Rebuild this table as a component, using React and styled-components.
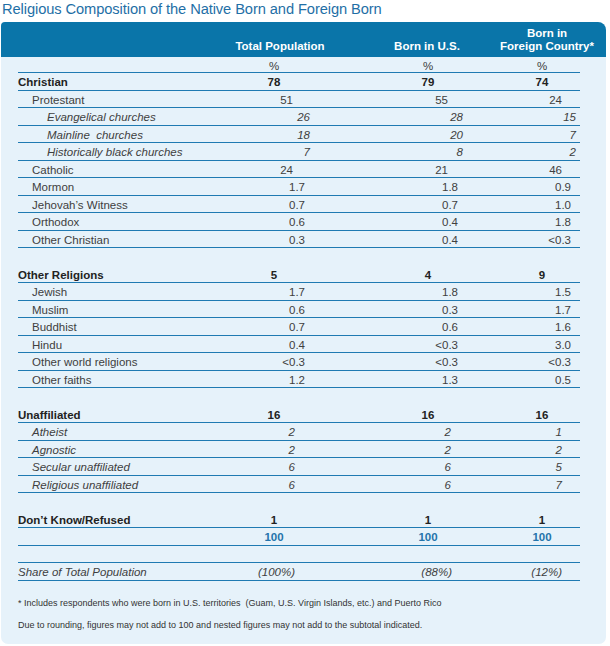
import React from 'react'
import styled, { createGlobalStyle } from 'styled-components'

const GlobalStyle = createGlobalStyle`
  body {
    margin: 0;
    background: #ffffff;
    font-family: "Liberation Sans", Arial, sans-serif;
  }
`

// right padding of plain numbers, per column, by kind of figure
const PAD = {
  int: [31, 30, 18],
  dec: [19, 20, 9],
  ital: [14, 15, 4],
  unaff: [29, 27, 18],
  share: [29, 26, 18],
}

const rows = [
  { kind: 'group', label: 'Christian', v: ['78', '79', '74'] },
  { kind: 'sub', label: 'Protestant', v: ['51', '55', '24'], num: 'int' },
  { kind: 'nested', label: 'Evangelical churches', v: ['26', '28', '15'], num: 'ital' },
  { kind: 'nested', label: 'Mainline  churches', v: ['18', '20', '7'], num: 'ital' },
  { kind: 'nested', label: 'Historically black churches', v: ['7', '8', '2'], num: 'ital' },
  { kind: 'sub', label: 'Catholic', v: ['24', '21', '46'], num: 'int' },
  { kind: 'sub', label: 'Mormon', v: ['1.7', '1.8', '0.9'], num: 'dec' },
  { kind: 'sub', label: 'Jehovah\u2019s Witness', v: ['0.7', '0.7', '1.0'], num: 'dec' },
  { kind: 'sub', label: 'Orthodox', v: ['0.6', '0.4', '1.8'], num: 'dec' },
  { kind: 'sub', label: 'Other Christian', v: ['0.3', '0.4', '<0.3'], num: 'dec' },
  { kind: 'spacer' },
  { kind: 'group', label: 'Other Religions', v: ['5', '4', '9'] },
  { kind: 'sub', label: 'Jewish', v: ['1.7', '1.8', '1.5'], num: 'dec' },
  { kind: 'sub', label: 'Muslim', v: ['0.6', '0.3', '1.7'], num: 'dec' },
  { kind: 'sub', label: 'Buddhist', v: ['0.7', '0.6', '1.6'], num: 'dec' },
  { kind: 'sub', label: 'Hindu', v: ['0.4', '<0.3', '3.0'], num: 'dec' },
  { kind: 'sub', label: 'Other world religions', v: ['<0.3', '<0.3', '<0.3'], num: 'dec' },
  { kind: 'sub', label: 'Other faiths', v: ['1.2', '1.3', '0.5'], num: 'dec' },
  { kind: 'spacer' },
  { kind: 'group', label: 'Unaffiliated', v: ['16', '16', '16'] },
  { kind: 'subItal', label: 'Atheist', v: ['2', '2', '1'], num: 'unaff' },
  { kind: 'subItal', label: 'Agnostic', v: ['2', '2', '2'], num: 'unaff' },
  { kind: 'subItal', label: 'Secular unaffiliated', v: ['6', '6', '5'], num: 'unaff' },
  { kind: 'subItal', label: 'Religious unaffiliated', v: ['6', '6', '7'], num: 'unaff' },
  { kind: 'spacer' },
  { kind: 'group', label: 'Don\u2019t Know/Refused', v: ['1', '1', '1'] },
  { kind: 'total', label: '', v: ['100', '100', '100'] },
  { kind: 'blank' },
  { kind: 'share', label: 'Share of Total Population', v: ['(100%)', '(88%)', '(12%)'], num: 'share' },
]

const indent = { group: 0, sub: 14, nested: 29, subItal: 14, share: 0, total: 0 }
const italic = { nested: true, subItal: true, share: true }
const COLS = [2, 4, 6]

const Page = styled.div`
  width: 610px;
  height: 646px;
  color: #333333;
`

const Title = styled.h1`
  margin: 0;
  padding: 1px 0 0 2px;
  height: 20px;
  box-sizing: border-box;
  font-size: 14.7px;
  font-weight: normal;
  line-height: 17px;
  color: #1f6fa6;
  letter-spacing: -0.1px;
`

const Panel = styled.div`
  margin-left: 1px;
  margin-top: 2px;
  width: 605px;
  height: 622px;
  box-sizing: border-box;
  background: #e6f2fa;
  border-radius: 4px 8px 7px 7px;
  overflow: hidden;
`

const Header = styled.div`
  height: 35px;
  background: #0a75a9;
  display: grid;
  grid-template-columns: 229px 100px 47px 100px 20px 100px;
  align-items: end;
  padding-bottom: 4px;
  box-sizing: border-box;
`

const HeadCell = styled.div`
  grid-column: ${({ $col }) => $col};
  grid-row: 1;
  color: #ffffff;
  font-weight: bold;
  font-size: 11.5px;
  line-height: 13px;
  text-align: center;
`

const Table = styled.div`
  margin: 0 17px;
  width: 562px;
`

const Row = styled.div`
  display: grid;
  grid-template-columns: 206px 100px 54px 100px 26px 76px;
  align-items: center;
  height: ${({ $h }) => $h || '17.5px'};
  box-sizing: border-box;
  border-bottom: ${({ $line }) => ($line ? '1px solid #1f7ab2' : 'none')};
  font-size: 11.5px;
  line-height: 14px;
  padding-top: 2px;
`

const Label = styled.div`
  grid-column: 1;
  padding-left: ${({ $indent }) => $indent}px;
  font-weight: ${({ $bold }) => ($bold ? 'bold' : 'normal')};
  font-style: ${({ $italic }) => ($italic ? 'italic' : 'normal')};
  color: ${({ $bold }) => ($bold ? '#222222' : '#404040')};
  white-space: pre;
`

const Value = styled.div`
  grid-column: ${({ $col }) => $col};
  text-align: ${({ $pad }) => ($pad === undefined ? 'center' : 'right')};
  padding-right: ${({ $pad }) => $pad || 0}px;
  font-weight: ${({ $bold }) => ($bold ? 'bold' : 'normal')};
  font-style: ${({ $italic }) => ($italic ? 'italic' : 'normal')};
  color: ${({ $blue, $bold }) => ($blue ? '#2474ab' : $bold ? '#222222' : '#404040')};
  white-space: pre;
`

const Notes = styled.div`
  padding: 16px 17px 0;
  font-size: 9px;
  line-height: 12px;
  color: #333333;

  p {
    margin: 0 0 10px;
    white-space: pre;
  }
`

const DataRow = ({ row }) => {
  if (row.kind === 'spacer') return <Row />
  if (row.kind === 'blank') return <Row $line />
  const bold = row.kind === 'group' || row.kind === 'total'
  return (
    <Row $line>
      <Label $indent={indent[row.kind]} $bold={bold} $italic={italic[row.kind]}>
        {row.label}
      </Label>
      {row.v.map((v, i) => (
        <Value
          key={i}
          $col={COLS[i]}
          $bold={bold}
          $blue={row.kind === 'total'}
          $italic={italic[row.kind]}
          $pad={row.num ? PAD[row.num][i] : undefined}
        >
          {v}
        </Value>
      ))}
    </Row>
  )
}

const App = () => {
  return (
    <Page>
      <GlobalStyle />
      <Title>Religious Composition of the Native Born and Foreign Born</Title>
      <Panel>
        <Header>
          <HeadCell $col={2}>Total Population</HeadCell>
          <HeadCell $col={4}>Born in U.S.</HeadCell>
          <HeadCell $col={6}>
            Born in
            <br />
            Foreign Country*
          </HeadCell>
        </Header>
        <Table>
          <Row $line $h="16px">
            {COLS.map((c) => (
              <Value key={c} $col={c}>%</Value>
            ))}
          </Row>
          {rows.map((row, i) => (
            <DataRow key={i} row={row} />
          ))}
        </Table>
        <Notes>
          <p>* Includes respondents who were born in U.S. territories  (Guam, U.S. Virgin Islands, etc.) and Puerto Rico</p>
          <p>Due to rounding, figures may not add to 100 and nested figures may not add to the subtotal indicated.</p>
        </Notes>
      </Panel>
    </Page>
  )
}

export default App
